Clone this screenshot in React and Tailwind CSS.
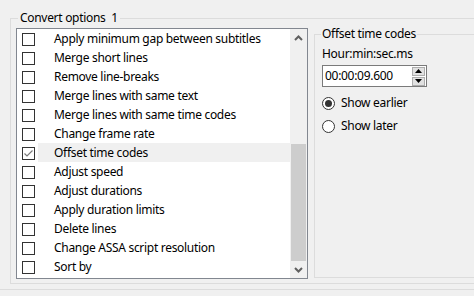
import React from "react";

const items = [
  "Apply minimum gap between subtitles",
  "Merge short lines",
  "Remove line-breaks",
  "Merge lines with same text",
  "Merge lines with same time codes",
  "Change frame rate",
  "Offset time codes",
  "Adjust speed",
  "Adjust durations",
  "Apply duration limits",
  "Delete lines",
  "Change ASSA script resolution",
  "Sort by",
];

function Check({ checked }) {
  return (
    <div className="w-[13px] h-[13px] mt-[4px] border border-[#333333] bg-white flex items-center justify-center shrink-0">
      {checked && (
        <svg width="11" height="11" viewBox="0 0 11 11">
          <path d="M1.5 5.5 L4 8 L9.5 2.5" fill="none" stroke="#7a7a7a" strokeWidth="1.2" />
        </svg>
      )}
    </div>
  );
}

function Chevron({ up }) {
  return (
    <svg width="9" height="6" viewBox="0 0 9 6">
      {up ? (
        <path d="M1 5 L4.5 1.5 L8 5" fill="none" stroke="#606060" strokeWidth="2" />
      ) : (
        <path d="M1 1 L4.5 4.5 L8 1" fill="none" stroke="#606060" strokeWidth="2" />
      )}
    </svg>
  );
}

function Radio({ checked, label }) {
  return (
    <div className="flex items-center h-[20px]">
      <div className="w-[13px] h-[13px] rounded-full border border-[#333333] bg-white flex items-center justify-center">
        {checked && <div className="w-[7px] h-[7px] rounded-full bg-[#333333]" />}
      </div>
      <span className="ml-[6px]">{label}</span>
    </div>
  );
}

export default function App() {
  return (
    <div
      className="w-[474px] h-[296px] bg-[#f0f0f0] overflow-hidden text-[12px] text-black leading-none tracking-[-0.3px]"
      style={{ fontFamily: '"Noto Sans", "Segoe UI", sans-serif' }}
    >
      <div className="relative ml-[10px] mt-[18px] w-[480px] h-[266px] border border-[#dcdcdc]">
        <div className="absolute left-[7px] top-[-8px] px-[2px] bg-[#f0f0f0] leading-[14px]">
          Convert options&nbsp; 1
        </div>
        <div className="flex items-start pl-[5px] pt-[9px]">
          <div className="w-[293px] h-[251px] border border-[#828790] bg-white flex">
            <div className="w-[273px] flex flex-col">
              {items.map((t, i) => (
                <div key={t} className="flex h-[19px] pl-[5px]">
                  <Check checked={i === 6} />
                  <div
                    className={
                      "flex-1 ml-[3px] pl-[16px] flex items-center " +
                      (i === 6 ? "bg-[#f0f0f0]" : "")
                    }
                  >
                    {t}
                  </div>
                </div>
              ))}
            </div>
            <div className="w-[17px] h-full bg-[#f0f0f0] flex flex-col">
              <div className="h-[17px] flex items-center justify-center">
                <Chevron up />
              </div>
              <div className="flex-1 flex flex-col justify-end items-center">
                <div className="w-[15px] h-[117px] bg-[#cdcdcd]" />
              </div>
              <div className="h-[17px] flex items-center justify-center">
                <Chevron />
              </div>
            </div>
          </div>
          <div className="relative ml-[6px] mt-[6px] w-[200px] h-[244px] border border-[#dcdcdc]">
            <div className="absolute left-[6px] top-[-8px] px-[1px] bg-[#f0f0f0] leading-[14px]">
              Offset time codes
            </div>
            <div className="pl-[7px] pt-[12px] flex flex-col">
              <div className="leading-[14px]">Hour:min:sec.ms</div>
              <div className="mt-[4px] w-[105px] h-[22px] border border-[#7a7a7a] bg-white flex items-center justify-between pl-[2px] pr-[1px]">
                <span>00:00:09.600</span>
                <div className="flex flex-col w-[13px] h-[19px] gap-[1px]">
                  <div className="flex-1 border border-[#adadad] bg-[#e1e1e1] flex items-center justify-center">
                    <svg width="7" height="4" viewBox="0 0 7 4"><path d="M0 4 L3.5 0 L7 4Z" fill="#000" /></svg>
                  </div>
                  <div className="flex-1 border border-[#adadad] bg-[#e1e1e1] flex items-center justify-center">
                    <svg width="7" height="4" viewBox="0 0 7 4"><path d="M0 0 L3.5 4 L7 0Z" fill="#000" /></svg>
                  </div>
                </div>
              </div>
              <div className="mt-[6px] flex flex-col gap-[3px]">
                <Radio checked label="Show earlier" />
                <Radio label="Show later" />
              </div>
            </div>
          </div>
        </div>
      </div>
      <div className="mt-[5px] border-t border-[#dcdcdc]" />
    </div>
  );
}
